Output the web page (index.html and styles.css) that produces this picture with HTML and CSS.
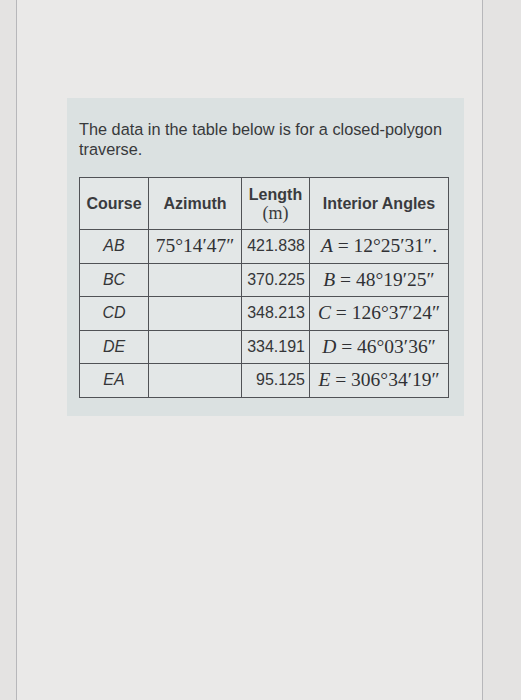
FILE: index.html
```html
<!DOCTYPE html>
<html>
<head>
<meta charset="utf-8">
<link rel="stylesheet" href="styles.css">
</head>
<body>
<div class="panel">
  <div class="card">
    <p class="intro">The data in the table below is for a closed-polygon traverse.</p>
    <table class="data">
      <colgroup>
        <col class="c1"><col class="c2"><col class="c3"><col class="c4">
      </colgroup>
      <tr class="head">
        <th>Course</th>
        <th>Azimuth</th>
        <th>Length<br><span class="m">(m)</span></th>
        <th>Interior Angles</th>
      </tr>
      <tr>
        <td class="course">AB</td>
        <td class="math center">75°14′47″</td>
        <td class="len">421.838</td>
        <td class="math center"><i>A</i> = 12°25′31″.</td>
      </tr>
      <tr>
        <td class="course">BC</td>
        <td></td>
        <td class="len">370.225</td>
        <td class="math center"><i>B</i> = 48°19′25″</td>
      </tr>
      <tr>
        <td class="course">CD</td>
        <td></td>
        <td class="len">348.213</td>
        <td class="math center"><i>C</i> = 126°37′24″</td>
      </tr>
      <tr>
        <td class="course">DE</td>
        <td></td>
        <td class="len">334.191</td>
        <td class="math center"><i>D</i> = 46°03′36″</td>
      </tr>
      <tr>
        <td class="course">EA</td>
        <td></td>
        <td class="len">95.125</td>
        <td class="math center"><i>E</i> = 306°34′19″</td>
      </tr>
    </table>
  </div>
</div>
</body>
</html>
```

FILE: styles.css
```css
html, body {
  margin: 0;
  padding: 0;
}
body {
  background: #e4e3e2;
  width: 521px;
  height: 700px;
  overflow: hidden;
  font-family: "Liberation Sans", Arial, sans-serif;
  color: #353638;
}
.panel {
  margin: 0 38px 0 16px;
  height: 700px;
  background: #eae9e8;
  border-left: 1px solid #b7b7ba;
  border-right: 1px solid #b7b7ba;
  padding-top: 98px;
  box-sizing: border-box;
}
.card {
  margin-left: 50px;
  width: 397px;
  height: 318px;
  background: #dbe1e1;
  padding: 21px 0 0 12px;
  box-sizing: border-box;
}
.intro {
  margin: 0;
  width: 380px;
  font-size: 16.3px;
  line-height: 20px;
  color: #38393b;
}
.data {
  margin-top: 18px;
  border-collapse: collapse;
  background: #e3e7e7;
  table-layout: fixed;
  width: 369px;
}
.c1 { width: 69px; }
.c2 { width: 93px; }
.c3 { width: 68px; }
.c4 { width: 139px; }
.data th, .data td {
  border: 1.5px solid #505256;
  padding: 0 4px;
  height: 32.5px;
  white-space: nowrap;
}
.head th {
  height: 51px;
  font-weight: bold;
  font-size: 16px;
  line-height: 19px;
  color: #3a3b3e;
  padding: 0 4px;
}
.m {
  font-family: "Liberation Serif", "DejaVu Serif", serif;
  font-weight: normal;
  font-size: 18px;
}
.course {
  text-align: center;
  font-style: italic;
  font-size: 16px;
}
.len {
  text-align: right;
  font-size: 16px;
}
.math {
  font-family: "Liberation Serif", "DejaVu Serif", serif;
  font-size: 19.5px;
  color: #303134;
}
.center {
  text-align: center;
}
.math i {
  font-style: italic;
}
```
